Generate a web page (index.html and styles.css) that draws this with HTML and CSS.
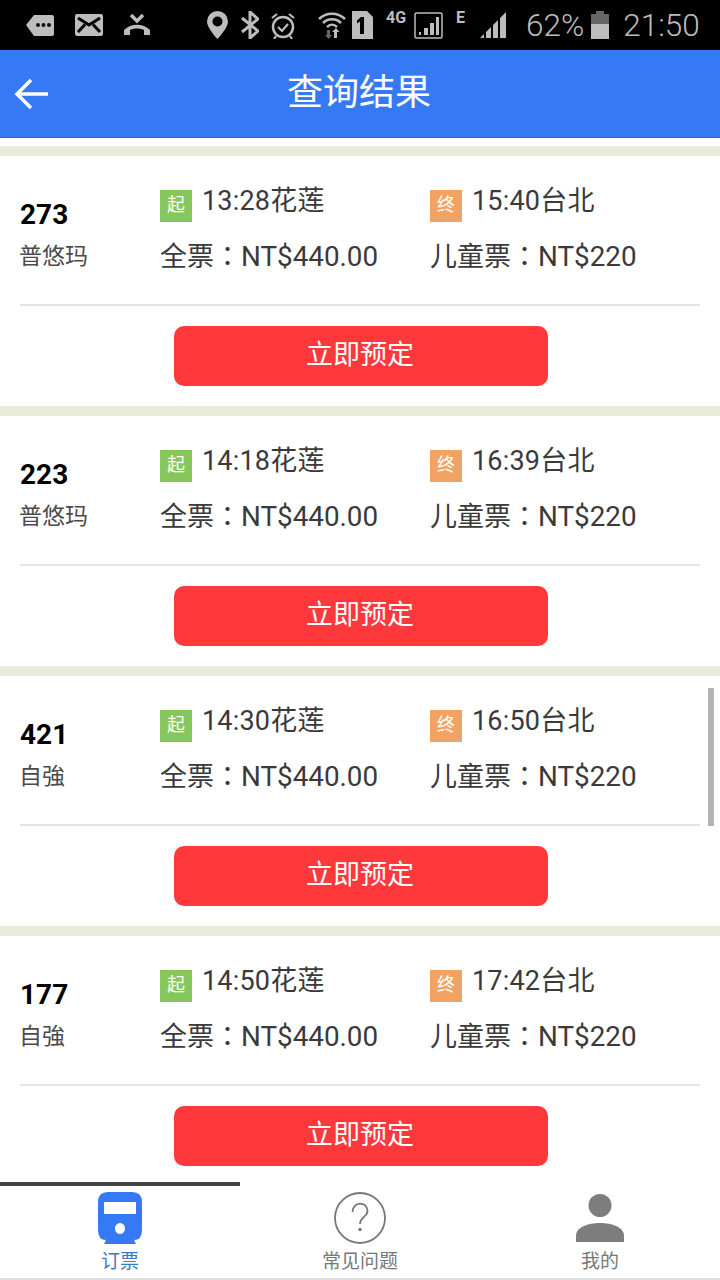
FILE: index.html
```html
<!DOCTYPE html>
<html lang="zh-CN">
<head>
<meta charset="utf-8">
<title>查询结果</title>
<link rel="stylesheet" href="styles.css">
</head>
<body>
<div class="phone">
  <div class="status">
    <svg class="si" style="margin-left:26px" width="28" height="22" viewBox="0 0 28 22"><path fill="#bdbdbd" d="M8 1H26a2 2 0 0 1 2 2V20a2 2 0 0 1-2 2H8L0 11Z"/><g fill="#111"><circle cx="12" cy="11" r="2"/><circle cx="17.500" cy="11" r="2"/><circle cx="23" cy="11" r="2"/></g></svg>
    <svg class="si" style="margin-left:21px" width="28" height="22" viewBox="0 0 28 22"><rect y="0" width="28" height="22" rx="2" fill="#bdbdbd"/><path d="M3 4 14 11 25 4M3 18 10 10.500M25 18 18 10.500" stroke="#000" stroke-width="3" fill="none"/></svg>
    <svg class="si" style="margin-left:21px" width="26" height="22" viewBox="0 0 26 22"><path d="M7 1l6 6 6-6" stroke="#bdbdbd" stroke-width="3.500" fill="none"/><path fill="#bdbdbd" d="M0 16c7-7 19-7 26 0v5h-6v-5c-4-2-10-2-14 0v5H0Z"/></svg>
    <svg class="si" style="margin-left:57px" width="21" height="28" viewBox="0 0 21 28"><path fill-rule="evenodd" fill="#bdbdbd" d="M10.500 0A10.500 10.500 0 0 1 21 10.500C21 17 10.500 28 10.500 28S0 17 0 10.500A10.500 10.500 0 0 1 10.500 0ZM10.500 5.500a5 5 0 1 0 0 10 5 5 0 0 0 0-10Z"/></svg>
    <svg class="si" style="margin-left:13px" width="18" height="28" viewBox="0 0 18 28"><path d="M1 7 17 20 9 27V1l8 7L1 21" stroke="#bdbdbd" stroke-width="3" fill="none"/></svg>
    <svg class="si" style="margin-left:12px" width="24" height="27" viewBox="0 0 24 27"><circle cx="12" cy="15" r="10" stroke="#bdbdbd" stroke-width="2.500" fill="none"/><path d="M7 15l4 4 6-7M1 6l5-4M23 6l-5-4M5 24l-2 3M19 24l2 3" stroke="#bdbdbd" stroke-width="2.200" fill="none"/></svg>
    <svg class="si" style="margin-left:23px" width="28" height="28" viewBox="0 0 28 28"><path d="M1 8C8 1 20 1 27 8M5 12C10 7 18 7 23 12M9 16C12 13 16 13 19 16" stroke="#bdbdbd" stroke-width="2.500" fill="none"/><path fill="#666" d="M9 19h3v5h2l-3.500 4L7 24h2Z"/><path fill="#bdbdbd" d="M18 17l3.500 4H19v6h-3v-6h-2Z"/></svg>
    <svg class="si" style="margin-left:6px" width="21" height="28" viewBox="0 0 21 28"><path fill-rule="evenodd" fill="#bdbdbd" d="M0 0H15L21 6V28H0ZM9 6 5 9.500V12.500L8 10.500V23H12V6Z"/></svg>
    <span class="tiny g4">4G</span>
    <svg class="si" style="margin-left:7px" width="29" height="27" viewBox="0 0 29 27"><rect x="1" y="1" width="27" height="25" rx="1.500" stroke="#bdbdbd" stroke-width="1.500" fill="none"/><path fill="#bdbdbd" d="M5 20h2v3H5ZM10 16h4v7h-4ZM16 11h4v12h-4ZM22 5h3v18h-3Z"/></svg>
    <span class="tiny e">E</span>
    <svg class="si" style="margin-left:15px" width="27" height="26" viewBox="0 0 27 26"><path fill="#bdbdbd" d="M0 26 4 22V26ZM6 20 11 15V26H6ZM13 13 18 8V26H13ZM20 6 26 0V26H20Z"/></svg>
    <span class="stxt pct">62%</span>
    <svg class="si" style="margin-left:7px" width="18" height="28" viewBox="0 0 18 28"><path fill="#666" d="M5 0H13V3H18V13H0V3H5Z"/><path fill="#bdbdbd" d="M0 13H18V28H0Z"/></svg>
    <span class="stxt clock">21:50</span>
  </div>

  <header class="appbar">
    <svg class="back" width="36" height="32" viewBox="0 0 36 32"><path d="M35 16H4M18 2 4 16 18 30" stroke="#fff" stroke-width="3.500" fill="none"/></svg>
    <h1>查询结果</h1>
  </header>

  <main class="list">
    <section class="card">
      <div class="info">
        <div class="train"><b>273</b><span>普悠玛</span></div>
        <div class="grid">
          <div class="stop"><i class="badge start">起</i><span>13:28花莲</span></div>
          <div class="stop"><i class="badge end">终</i><span>15:40台北</span></div>
          <div class="price">全票<span class="colon" lang="zh-TW">：</span><span class="amt">NT$440.00</span></div>
          <div class="price">儿童票<span class="colon" lang="zh-TW">：</span><span class="amt">NT$220</span></div>
        </div>
      </div>
      <div class="action"><button class="book">立即预定</button></div>
    </section>
    <section class="card">
      <div class="info">
        <div class="train"><b>223</b><span>普悠玛</span></div>
        <div class="grid">
          <div class="stop"><i class="badge start">起</i><span>14:18花莲</span></div>
          <div class="stop"><i class="badge end">终</i><span>16:39台北</span></div>
          <div class="price">全票<span class="colon" lang="zh-TW">：</span><span class="amt">NT$440.00</span></div>
          <div class="price">儿童票<span class="colon" lang="zh-TW">：</span><span class="amt">NT$220</span></div>
        </div>
      </div>
      <div class="action"><button class="book">立即预定</button></div>
    </section>
    <section class="card">
      <div class="info">
        <div class="train"><b>421</b><span>自強</span></div>
        <div class="grid">
          <div class="stop"><i class="badge start">起</i><span>14:30花莲</span></div>
          <div class="stop"><i class="badge end">终</i><span>16:50台北</span></div>
          <div class="price">全票<span class="colon" lang="zh-TW">：</span><span class="amt">NT$440.00</span></div>
          <div class="price">儿童票<span class="colon" lang="zh-TW">：</span><span class="amt">NT$220</span></div>
        </div>
      </div>
      <div class="action"><button class="book">立即预定</button></div>
    </section>
    <section class="card">
      <div class="info">
        <div class="train"><b>177</b><span>自強</span></div>
        <div class="grid">
          <div class="stop"><i class="badge start">起</i><span>14:50花莲</span></div>
          <div class="stop"><i class="badge end">终</i><span>17:42台北</span></div>
          <div class="price">全票<span class="colon" lang="zh-TW">：</span><span class="amt">NT$440.00</span></div>
          <div class="price">儿童票<span class="colon" lang="zh-TW">：</span><span class="amt">NT$220</span></div>
        </div>
      </div>
      <div class="action"><button class="book">立即预定</button></div>
    </section>
    <div class="scrollbar"></div>
  </main>

  <div class="indicator"></div>
  <nav class="tabs">
    <div class="tab active">
      <svg width="44" height="52" viewBox="0 0 44 52"><path fill="#3679f5" fill-rule="evenodd" d="M10 0H34Q44 0 44 10V38Q44 48 36 48L38 52H6L8 48Q0 48 0 38V10Q0 0 10 0ZM6 10V22H38V10ZM22 31a5 5.500 0 1 0 0 11 5 5.500 0 0 0 0-11Z"/></svg>
      <span>订票</span>
    </div>
    <div class="tab">
      <svg width="52" height="52" viewBox="0 0 52 52"><circle cx="26" cy="26" r="25" fill="none" stroke="#777" stroke-width="1.800"/><path d="M18.500 20C18.500 9 33.500 9 33.500 19 33.500 25 26 25 26 32" fill="none" stroke="#777" stroke-width="1.800"/><circle cx="26" cy="37.500" r="1.700" fill="#777"/></svg>
      <span>常见问题</span>
    </div>
    <div class="tab">
      <svg width="48" height="52" viewBox="0 0 48 52"><ellipse cx="24" cy="13.500" rx="11.500" ry="11.500" fill="#7d7d7d"/><path fill="#7d7d7d" d="M0 50V44C0 35 12 31 24 31S48 35 48 44V50Z"/></svg>
      <span>我的</span>
    </div>
  </nav>
</div>
</body>
</html>
```

FILE: styles.css
```css
* { box-sizing: border-box; }
html, body { margin: 0; padding: 0; }
body {
  width: 720px;
  height: 1280px;
  overflow: hidden;
  background: #fff;
  font-family: Roboto, "Noto Sans CJK SC", sans-serif;
  color: #3a3a3a;
}
.phone { display: flex; flex-direction: column; height: 1280px; }

.status {
  flex: 0 0 50px;
  height: 50px;
  background: #000;
  display: flex;
  align-items: center;
  color: #bdbdbd;
}
.si { flex: none; display: block; }
.tiny { font-size: 16px; font-weight: 700; line-height: 16px; align-self: flex-start; margin-top: 10px; }
.g4 { margin-left: 13px; width: 21px; }
.e { margin-left: 13px; width: 9px; }
.stxt { font-weight: 300; font-size: 31.500px; line-height: 48px; padding-top: 2px; }
.pct { margin-left: 19px; }
.clock { margin-left: 14px; }

.appbar {
  flex: 0 0 88px;
  background: #3679f5;
  border-bottom: 1px solid #1f62dc;
  display: flex;
  align-items: center;
  justify-content: center;
  position: relative;
  padding-right: 2px;
}
.appbar h1 { margin: 0; font-size: 36px; font-weight: 400; color: #fff; line-height: 87px; }
.back { position: absolute; left: 13px; top: 28px; }

.list { flex: 1 1 0; overflow: hidden; padding-top: 8px; position: relative; min-height: 0; }
.card { height: 260px; border-top: 10px solid #e9ead9; background: #fff; }
.info { height: 150px; margin: 0 20px; border-bottom: 2px solid #e3e5e3; display: flex; }
.train { flex: 0 0 140px; display: flex; flex-direction: column; padding-top: 42px; }
.train b { font-size: 28px; line-height: 34px; color: #000; font-weight: 700; }
.train span { font-size: 23px; line-height: 32px; margin: 9px 0 0 -1px; color: #4a4a4a; }
.grid { flex: 1; display: grid; grid-template-columns: 270px 1fr; grid-template-rows: 54px 42px; padding-top: 24px; }
.stop { display: flex; align-items: flex-start; font-size: 27px; line-height: 42px; letter-spacing: .2px; }
.badge {
  flex: 0 0 32px; height: 32px; margin: 10px 10px 0 0;
  font-style: normal; font-size: 18px; line-height: 29px; text-align: center; color: #fff; letter-spacing: 0;
}
.start { background: #85c75c; }
.end { background: #f2a262; }
.price { font-size: 27px; line-height: 42px; white-space: nowrap; }
.colon { font-family: "Noto Sans CJK TC", sans-serif; }
.amt { font-size: 27.800px; }

.action { display: flex; justify-content: center; padding: 20px 12px 0 14px; }
.book {
  width: 374px; height: 60px; border: 0; border-radius: 10px; background: #ff383c; color: #fff;
  font-family: inherit; font-size: 27px; padding: 0 2px 8px 0;
}
.scrollbar { position: absolute; right: 6px; top: 550px; width: 6px; height: 138px; background: #b5b5b5; }

.indicator { flex: 0 0 4px; width: 240px; background: #444; }
.tabs {
  flex: 0 0 94px;
  display: flex;
  border-bottom: 2px solid #dedede;
  background: #fff;
}
.tab { flex: 1; display: flex; flex-direction: column; align-items: center; padding-top: 6px; color: #777; }
.tab svg { display: block; }
.tab span { font-size: 19px; line-height: 24px; margin-top: 6px; }
.tab.active { color: #3679c5; }
```
